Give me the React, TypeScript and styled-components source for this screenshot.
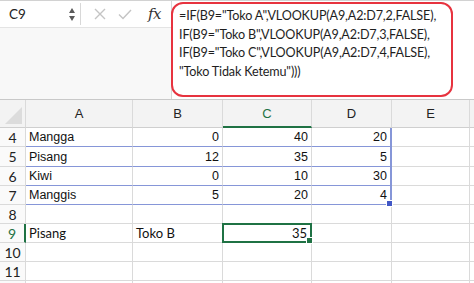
import React from 'react';
import styled, { createGlobalStyle, css } from 'styled-components';

const GlobalStyle = createGlobalStyle`
	html, body {
		margin: 0;
		padding: 0;
		background: #ffffff;
		overflow: hidden;
	}
`;

const CALIBRI = `"Lato", "Open Sans", sans-serif`;
const HELV = `"Liberation Sans", Arial, sans-serif`;
const GREEN = '#1f7244';
const BLUE = '#8696d8';
const GRID = '#dadada';

const Window = styled.div`
	width: 474px;
	height: 283px;
	overflow: hidden;
	background: #fff;
`;

const FormulaBar = styled.div`
	display: flex;
	border-top: 1px solid #d2d2d2;
	border-bottom: 1px solid #c9c9c9;
	box-sizing: border-box;
	height: 100px;
	background: #fff;
`;

const LeftPanel = styled.div`
	width: 172px;
	display: flex;
	flex-direction: column;
	border-right: 1px solid #d6d6d6;
	box-sizing: border-box;
`;

const TopRow = styled.div`
	display: flex;
	align-items: center;
	height: 26px;
	background: #fff;
	border-bottom: 1px solid #e4e4e4;
`;

const NameBox = styled.div`
	width: 81px;
	height: 22px;
	display: flex;
	align-items: center;
	justify-content: space-between;
	padding: 0 5px 0 9px;
	box-sizing: border-box;
	border-right: 1px solid #d8d8d8;
	font-family: ${CALIBRI};
	font-size: 13.5px;
	color: #222;
`;

const Spinner = styled.div`
	display: flex;
	flex-direction: column;
	gap: 3px;
	align-items: center;
`;

const Arrow = styled.div<{ $down?: boolean }>`
	width: 0;
	height: 0;
	border-left: 3.5px solid transparent;
	border-right: 3.5px solid transparent;
	${p => p.$down
		? css`border-top: 5px solid #5a5a5a;`
		: css`border-bottom: 5px solid #5a5a5a;`}
`;

const Tools = styled.div`
	flex: 1;
	display: flex;
	align-items: center;
	padding-left: 13px;
	gap: 12px;
`;

const Fx = styled.span`
	font-family: "DejaVu Serif", "Liberation Serif", serif;
	font-style: italic;
	font-size: 15px;
	color: #333;
	margin-left: 4px;
	letter-spacing: -0.5px;
`;

const LowerFill = styled.div`
	flex: 1;
	background: #f8f8f8;
`;

const FormulaArea = styled.div`
	width: 281px;
	padding-top: 1px;
	background: #fff;
`;

const FormulaBox = styled.div`
	height: 95px;
	box-sizing: border-box;
	border: 2.5px solid #e7333f;
	border-radius: 12px;
	padding: 3px 0 0 6px;
	font-family: ${CALIBRI};
	font-size: 12.6px;
	letter-spacing: -0.15px;
	line-height: 18.7px;
	color: #1e1e1e;
	white-space: pre;
	margin-left: -1px;
`;

const RightFill = styled.div`
	flex: 1;
	background: #fff;
`;

const COLS = '26px 107px 90px 89px 80px 78px 10px';

const Sheet = styled.div`
	display: grid;
	grid-template-columns: ${COLS};
`;

const HeadCell = styled.div<{ $active?: boolean }>`
	height: 28px;
	box-sizing: border-box;
	background: #f3f3f3;
	border-right: 1px solid ${GRID};
	border-bottom: ${p => (p.$active ? `2px solid ${GREEN}` : `1px solid #cfcfcf`)};
	display: flex;
	align-items: center;
	justify-content: center;
	font-family: ${HELV};
	font-size: 13px;
	color: ${p => (p.$active ? GREEN : '#222')};
	padding-top: ${p => (p.$active ? '1px' : '0')};
`;

const Corner = styled(HeadCell)`
	position: relative;
	&::after {
		content: '';
		position: absolute;
		right: 3px;
		bottom: 3px;
		width: 0;
		height: 0;
		border-left: 17px solid transparent;
		border-bottom: 17px solid #dcdcdc;
	}
`;

const RowNum = styled.div<{ $h: number; $active?: boolean }>`
	height: ${p => p.$h}px;
	box-sizing: border-box;
	background: #fafafa;
	border-bottom: 1px solid ${GRID};
	border-right: ${p => (p.$active ? `2px solid ${GREEN}` : `1px solid ${GRID}`)};
	display: flex;
	align-items: center;
	justify-content: center;
	font-family: ${CALIBRI};
	font-size: 14px;
	color: ${p => (p.$active ? GREEN : '#222')};
`;

const Cell = styled.div<{
	$h: number;
	$num?: boolean;
	$calibri?: boolean;
	$range?: boolean;
	$rangeRight?: boolean;
	$selected?: boolean;
}>`
	position: relative;
	height: ${p => p.$h}px;
	box-sizing: border-box;
	border-right: 1px solid ${p => (p.$rangeRight ? BLUE : GRID)};
	border-bottom: 1px solid ${p => (p.$range ? BLUE : GRID)};
	display: flex;
	align-items: center;
	justify-content: ${p => (p.$num ? 'flex-end' : 'flex-start')};
	padding: 0 3px 0 3px;
	font-family: ${p => (p.$calibri ? CALIBRI : HELV)};
	font-size: ${p => (p.$calibri ? '13px' : '12.5px')};
	color: #111;
	white-space: nowrap;
	${p => p.$rangeRight && css`border-right-width: 2px;`}
	${p => p.$selected && css`
		border: 2px solid ${GREEN};
		margin: -1px 0 0 -1px;
		height: ${p.$h + 1}px;
		padding-right: 3px;
	`}
`;

const Handle = styled.span<{ $color: string }>`
	position: absolute;
	right: -3px;
	bottom: -3px;
	width: 5px;
	height: 5px;
	background: ${p => p.$color};
	border: 1px solid #fff;
	z-index: 2;
`;

type Row = {
	n: number;
	h: number;
	a?: string;
	b?: string;
	c?: string;
	d?: string;
	range?: boolean;
	calibri?: boolean;
	hidden?: boolean;
};

const rows: Row[] = [
	{ n: 4, h: 19, a: 'Mangga', b: '0', c: '40', d: '20', range: true },
	{ n: 5, h: 20, a: 'Pisang', b: '12', c: '35', d: '5', range: true },
	{ n: 6, h: 19, a: 'Kiwi', b: '0', c: '10', d: '30', range: true },
	{ n: 7, h: 19, a: 'Manggis', b: '5', c: '20', d: '4', range: true },
	{ n: 8, h: 19 },
	{ n: 9, h: 19, a: 'Pisang', b: 'Toko B', c: '35', calibri: true },
	{ n: 10, h: 19 },
	{ n: 11, h: 19 },
	{ n: 12, h: 19, hidden: true },
];

const formula = [
	'=IF(B9="Toko A",VLOOKUP(A9,A2:D7,2,FALSE),',
	'IF(B9="Toko B",VLOOKUP(A9,A2:D7,3,FALSE),',
	'IF(B9="Toko C",VLOOKUP(A9,A2:D7,4,FALSE),',
	'"Toko Tidak Ketemu")))',
].join('\n');

function CloseIcon() {
	return (
		<svg width="12" height="12" viewBox="0 0 12 12">
			<path d="M1 1 L11 11 M11 1 L1 11" stroke="#c4c4c4" strokeWidth="1.4" fill="none" />
		</svg>
	);
}

function CheckIcon() {
	return (
		<svg width="14" height="11" viewBox="0 0 14 11">
			<path d="M1 5.5 L5 9.5 L13 1" stroke="#c4c4c4" strokeWidth="1.4" fill="none" />
		</svg>
	);
}

export default function App() {
	return (
		<Window>
			<GlobalStyle />
			<FormulaBar>
				<LeftPanel>
					<TopRow>
						<NameBox>
							<span>C9</span>
							<Spinner>
								<Arrow />
								<Arrow $down />
							</Spinner>
						</NameBox>
						<Tools>
							<CloseIcon />
							<CheckIcon />
							<Fx>fx</Fx>
						</Tools>
					</TopRow>
					<LowerFill />
				</LeftPanel>
				<FormulaArea>
					<FormulaBox>{formula}</FormulaBox>
				</FormulaArea>
				<RightFill />
			</FormulaBar>
			<Sheet>
				<Corner />
				<HeadCell>A</HeadCell>
				<HeadCell>B</HeadCell>
				<HeadCell $active>C</HeadCell>
				<HeadCell>D</HeadCell>
				<HeadCell>E</HeadCell>
				<HeadCell />
				{rows.map(r => (
					<React.Fragment key={r.n}>
						<RowNum $h={r.h} $active={r.n === 9}>{r.hidden ? '' : r.n}</RowNum>
						<Cell $h={r.h} $range={r.range} $calibri={r.calibri}>{r.a}</Cell>
						<Cell $h={r.h} $range={r.range} $calibri={r.calibri} $num={!r.calibri}>{r.b}</Cell>
						<Cell $h={r.h} $range={r.range} $calibri={r.calibri} $num $selected={r.n === 9}>
							{r.c}
							{r.n === 9 && <Handle $color={GREEN} />}
						</Cell>
						<Cell $h={r.h} $range={r.range} $rangeRight={r.range} $num>
							{r.d}
							{r.n === 7 && <Handle $color="#4157c6" />}
						</Cell>
						<Cell $h={r.h} />
						<Cell $h={r.h} />
					</React.Fragment>
				))}
			</Sheet>
		</Window>
	);
}
